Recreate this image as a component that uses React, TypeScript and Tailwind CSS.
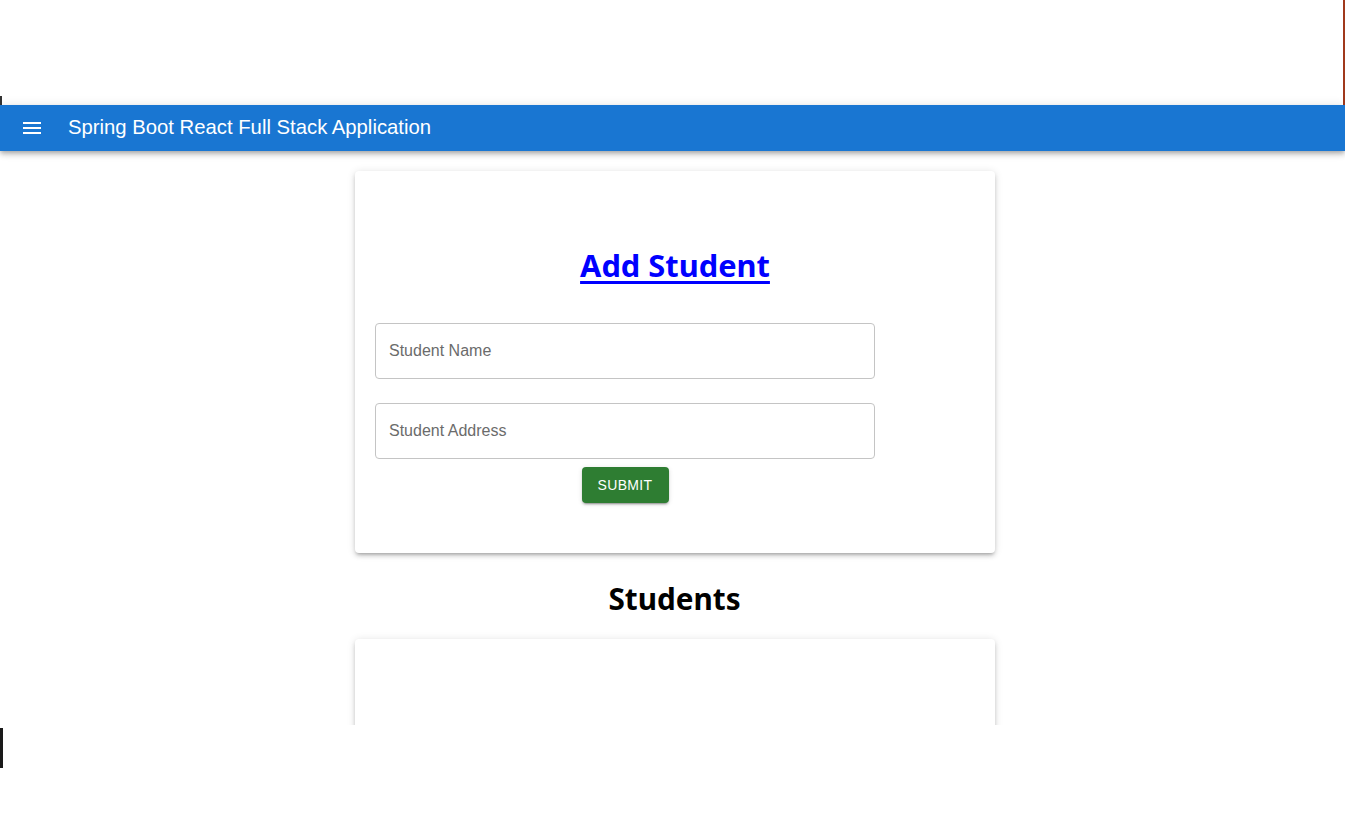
import React from 'react'

const heading = { fontFamily: '"Noto Sans", "Open Sans", sans-serif' }

function MenuIcon() {
  return (
    <svg width="24" height="24" viewBox="0 0 24 24" fill="white">
      <path d="M3 18h18v-2H3v2zm0-5h18v-2H3v2zm0-7v2h18V6H3z" />
    </svg>
  )
}

function TextBox({ placeholder }: { placeholder: string }) {
  return (
    <input
      placeholder={placeholder}
      className="w-[500px] h-[56px] px-[13px] rounded-[4px] border border-[#c4c4c4] text-[16px] text-[#222] placeholder:text-[#6b6b6b] outline-none"
    />
  )
}

export default function App() {
  return (
    <div
      className="relative w-[1345px] h-[834px] bg-white overflow-hidden"
      style={{ fontFamily: '"Liberation Sans", Arial, sans-serif' }}
    >
      {/* window edge leftovers from the capture */}
      <div className="absolute left-0 top-[96px] w-[2px] h-[9px] bg-[#333]" />
      <div className="absolute right-0 top-0 w-[2px] h-[105px] bg-[#a0391c]" />
      <div className="absolute left-0 top-[728px] w-[3px] h-[40px] bg-[#1a1a1a]" />

      <div className="h-[105px]" />

      <header className="relative z-10 h-[46px] bg-[#1976d2] flex items-center pl-[20px] shadow-[0px_2px_4px_-1px_rgba(0,0,0,0.2),0px_4px_5px_0px_rgba(0,0,0,0.14),0px_1px_10px_0px_rgba(0,0,0,0.12)]">
        <MenuIcon />
        <span className="ml-[24px] text-white text-[20.3px] leading-none -mt-[1px]">
          Spring Boot React Full Stack Application
        </span>
      </header>

      <main className="h-[574px] overflow-hidden pt-[20px]">
        <div className="ml-[355px] w-[640px] bg-white rounded-[4px] px-[20px] pt-[72px] pb-[50px] shadow-[0px_3px_3px_-2px_rgba(0,0,0,0.2),0px_3px_4px_0px_rgba(0,0,0,0.14),0px_1px_8px_0px_rgba(0,0,0,0.12)]">
          <h1
            className="text-center text-[30.8px] font-bold leading-[44px] text-[#0000ff] underline underline-offset-[4px] decoration-[3px]"
            style={heading}
          >
            Add Student
          </h1>
          <form className="mt-[36px] w-[500px] flex flex-col">
            <TextBox placeholder="Student Name" />
            <div className="h-[24px]" />
            <TextBox placeholder="Student Address" />
            <div className="flex justify-center mt-[8px]">
              <button
                type="button"
                className="h-[36px] px-[16px] rounded-[4px] bg-[#2e7d32] text-white text-[14px] font-medium tracking-[0.35px] shadow-[0px_3px_1px_-2px_rgba(0,0,0,0.2),0px_2px_2px_0px_rgba(0,0,0,0.14),0px_1px_5px_0px_rgba(0,0,0,0.12)]"
              >
                SUBMIT
              </button>
            </div>
          </form>
        </div>

        <h1
          className="mt-[26px] mb-[20px] pl-[4px] text-center text-[29.7px] font-bold leading-[40px] text-black"
          style={heading}
        >
          Students
        </h1>

        <div className="ml-[355px] w-[640px] h-[200px] bg-white rounded-[4px] shadow-[0px_3px_3px_-2px_rgba(0,0,0,0.2),0px_3px_4px_0px_rgba(0,0,0,0.14),0px_1px_8px_0px_rgba(0,0,0,0.12)]" />
      </main>
    </div>
  )
}
